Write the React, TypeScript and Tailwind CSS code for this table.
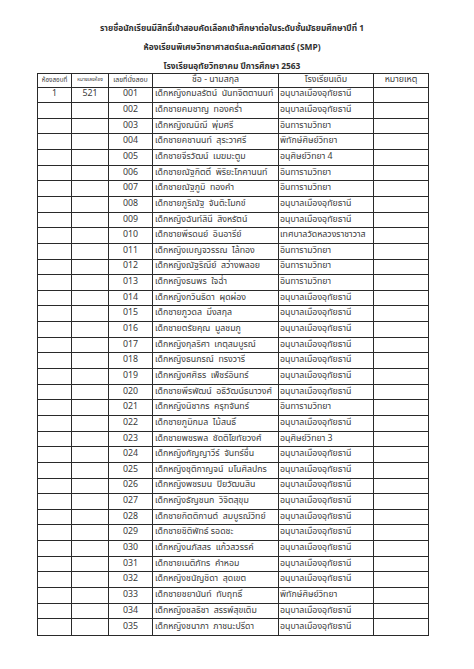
import React from "react";

const rows: [string, string][] = [
  ["เด็กหญิงกมลรัตน์  นันทจิตตานนท์", "อนุบาลเมืองอุทัยธานี"],
  ["เด็กชายคมชาญ  ทองคร่ำ", "อนุบาลเมืองอุทัยธานี"],
  ["เด็กหญิงณนิฌี  พุ่มศรี", "อินทารามวิทยา"],
  ["เด็กชายคชานนท์  สุระวาศรี", "พิทักษ์ศิษย์วิทยา"],
  ["เด็กชายจีรวัฒน์  เมฆมะตูม", "อนุศิษย์วิทยา 4"],
  ["เด็กชายณัฐกิตติ์  พิริยะโภคานนท์", "อินทารามวิทยา"],
  ["เด็กชายณัฐภูมิ  ทองคำ", "อินทารามวิทยา"],
  ["เด็กชายภูริณัฐ  จันติะโมกข์", "อนุบาลเมืองอุทัยธานี"],
  ["เด็กหญิงฉันท์สินี  สิงหรัตน์", "อนุบาลเมืองอุทัยธานี"],
  ["เด็กชายพีรดนย์  อินอารีย์", "เทศบาลวัดหลวงราชาวาส"],
  ["เด็กหญิงเบญจวรรณ  ไล้ทอง", "อินทารามวิทยา"],
  ["เด็กหญิงณัฐริณีย์  สว่างพลอย", "อินทารามวิทยา"],
  ["เด็กหญิงธนพร  ใจฉ่ำ", "อินทารามวิทยา"],
  ["เด็กหญิงกวินธิดา  ผุดผ่อง", "อนุบาลเมืองอุทัยธานี"],
  ["เด็กชายภูวดล  มิ่งสกุล", "อนุบาลเมืองอุทัยธานี"],
  ["เด็กชายตรัยคุณ  มูลชมภู", "อนุบาลเมืองอุทัยธานี"],
  ["เด็กหญิงกุลริศา  เกตุสมบูรณ์", "อนุบาลเมืองอุทัยธานี"],
  ["เด็กหญิงธนภรณ์  ทรงวารี", "อนุบาลเมืองอุทัยธานี"],
  ["เด็กหญิงศศิธร  เพ็ชร์อินทร์", "อนุบาลเมืองอุทัยธานี"],
  ["เด็กชายพีรพัฒน์  อธิวัฒน์ธนาวงศ์", "อนุบาลเมืองอุทัยธานี"],
  ["เด็กหญิงนิชากร  ครุฑจันทร์", "อินทารามวิทยา"],
  ["เด็กชายภูมิกมล  ไม้สนธิ์", "อนุบาลเมืองอุทัยธานี"],
  ["เด็กชายพชรพล  ชัดติโยทัยวงศ์", "อนุศิษย์วิทยา 3"],
  ["เด็กหญิงกัญญาวีร์  จันทร์ชื่น", "อนุบาลเมืองอุทัยธานี"],
  ["เด็กหญิงชุติกาญจน์  มโนศิลปกร", "อนุบาลเมืองอุทัยธานี"],
  ["เด็กหญิงพชรมน  ปิยวัฒนสิน", "อนุบาลเมืองอุทัยธานี"],
  ["เด็กหญิงธัญชนก  วิจิตสุขุม", "อนุบาลเมืองอุทัยธานี"],
  ["เด็กชายกิตติกานต์  สมบูรณ์วิทย์", "อนุบาลเมืองอุทัยธานี"],
  ["เด็กชายชิติพัทธ์ รอดชะ", "อนุบาลเมืองอุทัยธานี"],
  ["เด็กหญิงนภัสสร  แก้วสวรรค์", "อนุบาลเมืองอุทัยธานี"],
  ["เด็กชายเนติภัทร  คำหอม", "อนุบาลเมืองอุทัยธานี"],
  ["เด็กหญิงชนัญชิดา  สุดเขต", "อนุบาลเมืองอุทัยธานี"],
  ["เด็กชายชยานันท์  ทับฤทธิ์", "พิทักษ์ศิษย์วิทยา"],
  ["เด็กหญิงชลธิชา  สรรพ์สุขเติม", "อนุบาลเมืองอุทัยธานี"],
  ["เด็กหญิงชนาภา  ภาชนะปรีดา", "อนุบาลเมืองอุทัยธานี"],
];

const cols = "grid grid-cols-[34px_37px_44px_126px_95px_55px]";
const cell = "border-r border-[#2a2a2a] flex items-center overflow-hidden whitespace-pre";

export default function App() {
  return (
    <div
      className="w-[474px] h-[669px] bg-white text-[#3a3a3a] pt-[22.5px]"
      style={{ fontFamily: '"Noto Sans Thai", "Noto Sans", "Liberation Sans", sans-serif' }}
    >
      <div className="flex flex-col items-center gap-[8px] mr-[10px] text-[8.4px] font-bold leading-[11px] text-[#303030]">
        <div>รายชื่อนักเรียนมีสิทธิ์เข้าสอบคัดเลือกเข้าศึกษาต่อในระดับชั้นมัธยมศึกษาปีที่ 1</div>
        <div>ห้องเรียนพิเศษวิทยาศาสตร์และคณิตศาสตร์ (SMP)</div>
        <div>โรงเรียนอุทัยวิทยาคม ปีการศึกษา 2563</div>
      </div>
      <div className="ml-[37px] mt-[1px] w-[392px] border border-r-0 border-[#2a2a2a] text-[8.8px] leading-none">
        <div className={`${cols} h-[14px] border-b border-[#2a2a2a]`}>
          <div className={`${cell} justify-center text-[6.3px]`}>ห้องสอบที่</div>
          <div className={`${cell} justify-center text-[4.8px]`}>หมายเลขห้อง</div>
          <div className={`${cell} justify-center text-[7px]`}>เลขที่นั่งสอบ</div>
          <div className={`${cell} justify-center`}>ชื่อ - นามสกุล</div>
          <div className={`${cell} justify-center`}>โรงเรียนเดิม</div>
          <div className={`${cell} justify-center`}>หมายเหตุ</div>
        </div>
        {rows.map(([name, school], i) => (
          <div
            key={i}
            className={`${cols} h-[15.65px] ${i === rows.length - 1 ? "" : "border-b border-[#2a2a2a]"}`}
          >
            <div className={`${cell} justify-center`}>{i === 0 ? "1" : ""}</div>
            <div className={`${cell} justify-center`}>{i === 0 ? "521" : ""}</div>
            <div className={`${cell} justify-center`}>{String(i + 1).padStart(3, "0")}</div>
            <div className={`${cell} pl-[2px]`}>{name}</div>
            <div className={`${cell} pl-[1px]`}>{school}</div>
            <div className={cell}></div>
          </div>
        ))}
      </div>
    </div>
  );
}
